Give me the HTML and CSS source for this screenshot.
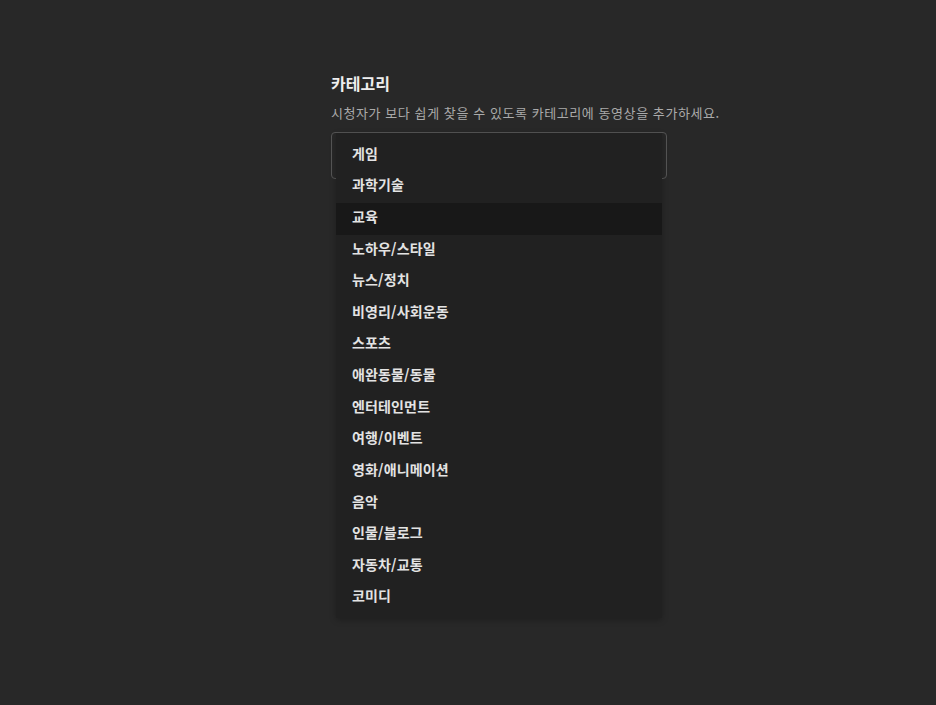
FILE: index.html
```html
<!DOCTYPE html>
<html lang="ko">
<head>
<meta charset="utf-8">
<link rel="stylesheet" href="styles.css">
</head>
<body>
<div class="panel">
  <h2 class="title">카테고리</h2>
  <p class="desc">시청자가 보다 쉽게 찾을 수 있도록 카테고리에 동영상을 추가하세요.</p>
  <div class="select-wrap">
    <div class="select"></div>
    <ul class="menu">
      <li class="item">게임</li>
      <li class="item">과학기술</li>
      <li class="item active">교육</li>
      <li class="item">노하우/스타일</li>
      <li class="item">뉴스/정치</li>
      <li class="item">비영리/사회운동</li>
      <li class="item">스포츠</li>
      <li class="item">애완동물/동물</li>
      <li class="item">엔터테인먼트</li>
      <li class="item">여행/이벤트</li>
      <li class="item">영화/애니메이션</li>
      <li class="item">음악</li>
      <li class="item">인물/블로그</li>
      <li class="item">자동차/교통</li>
      <li class="item">코미디</li>
    </ul>
  </div>
</div>
</body>
</html>
```
FILE: styles.css
```css
html, body {
  margin: 0;
  padding: 0;
  background: #282828;
  height: 100%;
}
body {
  font-family: "Noto Sans CJK KR", "Noto Sans", Roboto, sans-serif;
  color: #f1f1f1;
}
.panel {
  width: 420px;
  padding-top: 72px;
  margin-left: 331px;
}
.title {
  margin: 0;
  font-size: 16px;
  font-weight: 700;
  line-height: 22px;
  color: #eeeeee;
}
.desc {
  margin: 10px 0 0 0;
  font-size: 13px;
  letter-spacing: 0.57px;
  line-height: 18px;
  color: #aaaaaa;
  white-space: nowrap;
}
.select-wrap {
  position: relative;
  margin-top: 10px;
  width: 336px;
}
.select {
  height: 47px;
  border: 1px solid #555555;
  border-radius: 4px;
  box-sizing: border-box;
}
.menu {
  position: absolute;
  left: 5px;
  top: 1px;
  width: 326px;
  margin: 0;
  padding: 6.7px 0 4px 0;
  list-style: none;
  background: #212121;
  box-shadow: 0 2px 6px rgba(0,0,0,0.25);
}
.item {
  height: 31.64px;
  line-height: 26px;
  padding-left: 16px;
  font-size: 14px;
  letter-spacing: 0.15px;
  font-weight: 700;
  color: #e3e3e3;
}
.item.active {
  background: #181818;
}
```
